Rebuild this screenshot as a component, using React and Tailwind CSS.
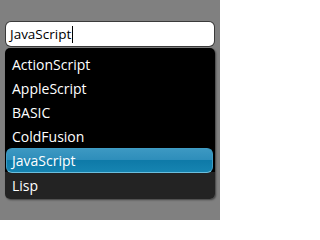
import React from 'react';

const items = ['ActionScript', 'AppleScript', 'BASIC', 'ColdFusion', 'JavaScript', 'Lisp'];

export default function App() {
  const selected = 'JavaScript';

  return (
    <div className="w-[220px] h-[220px] bg-[#808080] pt-[21px] px-[5px] font-['Open_Sans',sans-serif] overflow-hidden">
      {/* search box */}
      <div className="h-[26px] rounded-[6px] bg-[#3a3a3a] p-px">
        <div className="h-full rounded-[5px] bg-white flex items-center pl-[4px] text-[13.5px] text-black">
          <span>JavaScript</span>
          <span className="w-px h-[17px] bg-black ml-px" />
        </div>
      </div>

      {/* suggestion list */}
      <div className="mt-[1px] h-[151px] rounded-[5px] bg-[linear-gradient(to_bottom,#000_0,#000_124px,#232323_124px)] shadow-[1px_1px_2px_rgba(0,0,0,0.5)] pl-px pr-[2px] pt-[4px] flex flex-col">
        {items.map((item) => (
          <div
            key={item}
            className={
              item === selected
                ? "h-[25px] shrink-0 flex items-center pl-[5px] rounded-[6px] text-white text-[14px] bg-[linear-gradient(to_bottom,#3c98c2,#2d8dba_50%,#0e7aa8_50%,#1684b1)] border border-[#3f9cc4] border-b-[#6cbedc]"
                : "h-[24px] shrink-0 flex items-center pl-[6px] text-white text-[14px]"
            }
          >
            {item}
          </div>
        ))}
      </div>
    </div>
  );
}
